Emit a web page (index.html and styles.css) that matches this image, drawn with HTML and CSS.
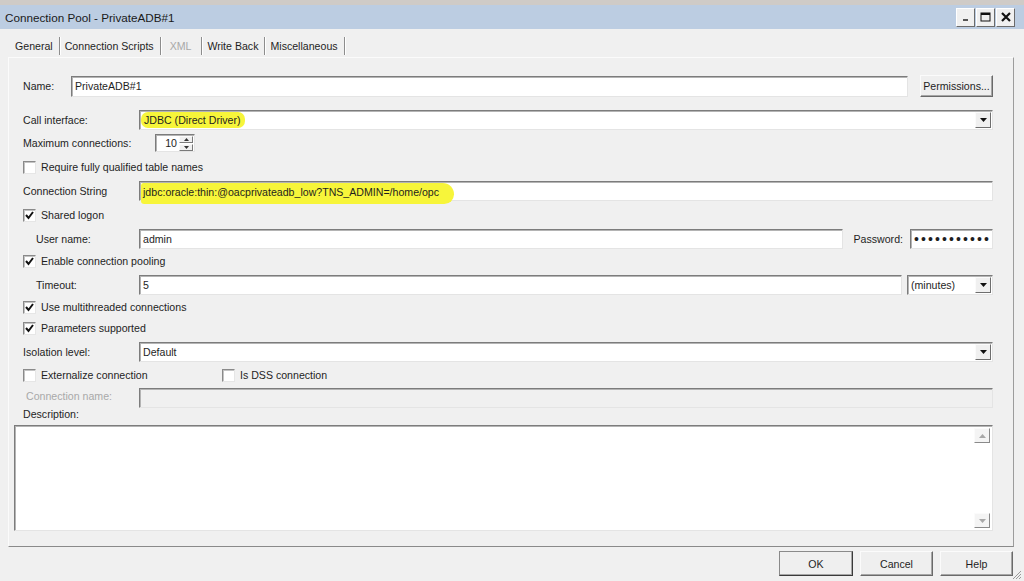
FILE: index.html
```html
<!DOCTYPE html>
<html lang="en">
<head>
    <meta charset="UTF-8">
    <title>Connection Pool - PrivateADB#1</title>
    <link rel="stylesheet" href="styles.css">
</head>
<body>
    <div class="window">
        <div class="titlebar">
            <span class="title">Connection Pool - PrivateADB#1</span>
            <div class="controls">
                <span class="ctl"><svg width="10" height="10" viewBox="0 0 10 10"><rect x="2" y="7" width="5" height="2" fill="#555"/></svg></span>
                <span class="ctl"><svg width="11" height="10" viewBox="0 0 11 10"><rect x="1" y="1" width="9" height="8" fill="none" stroke="#111" stroke-width="1"/><rect x="1" y="1" width="9" height="2" fill="#111"/></svg></span>
                <span class="ctl"><svg width="10" height="10" viewBox="0 0 10 10"><path d="M1 1 L9 9 M9 1 L1 9" stroke="#111" stroke-width="2.2"/></svg></span>
            </div>
        </div>

        <div class="tabs">
            <span class="tab active">General</span>
            <span class="tab">Connection Scripts</span>
            <span class="tab disabled">XML</span>
            <span class="tab">Write Back</span>
            <span class="tab">Miscellaneous</span>
        </div>

        <div class="panel">
            <div class="row tall">
                <label class="lbl lbl-name">Name:</label>
                <div class="field name-field">PrivateADB#1</div>
                <button class="btn perm">Permissions...</button>
            </div>

            <div class="row field-row m11">
                <label class="lbl">Call interface:</label>
                <div class="field select">
                    <span class="mark">JDBC (Direct Driver)</span>
                    <span class="drop"><svg width="7" height="4" viewBox="0 0 7 4"><path d="M0 0 H7 L3.5 4 Z" fill="#111"/></svg></span>
                </div>
            </div>

            <div class="row spin-row m2">
                <label class="lbl lbl-max">Maximum connections:</label>
                <div class="field spinner">
                    <span class="spin-val">10</span>
                    <span class="spin-btns">
                        <span class="spin-btn"><svg width="5" height="3" viewBox="0 0 5 3"><path d="M0 3 H5 L2.5 0 Z" fill="#333"/></svg></span>
                        <span class="spin-btn"><svg width="5" height="3" viewBox="0 0 5 3"><path d="M0 0 H5 L2.5 3 Z" fill="#333"/></svg></span>
                    </span>
                </div>
            </div>

            <div class="row check-row m5">
                <span class="box"></span>
                <span>Require fully qualified table names</span>
            </div>

            <div class="row field-row m4">
                <label class="lbl">Connection String</label>
                <div class="field">
                    <span class="mark mark-long">jdbc:oracle:thin:@oacprivateadb_low?TNS_ADMIN=/home/opc</span>
                </div>
            </div>

            <div class="row check-row m4">
                <span class="box"><svg width="11" height="11" viewBox="0 0 11 11"><path d="M2 5 L4.5 8 L9 2" fill="none" stroke="#111" stroke-width="2"/></svg></span>
                <span>Shared logon</span>
            </div>

            <div class="row field-row m4">
                <label class="lbl sub">User name:</label>
                <div class="field user">admin</div>
                <label class="pass-lbl">Password:</label>
                <div class="field pass">•••••••••••</div>
            </div>

            <div class="row check-row m2">
                <span class="box"><svg width="11" height="11" viewBox="0 0 11 11"><path d="M2 5 L4.5 8 L9 2" fill="none" stroke="#111" stroke-width="2"/></svg></span>
                <span>Enable connection pooling</span>
            </div>

            <div class="row field-row m4">
                <label class="lbl sub">Timeout:</label>
                <div class="field timeout">5</div>
                <div class="field select unit">
                    <span>(minutes)</span>
                    <span class="drop"><svg width="7" height="4" viewBox="0 0 7 4"><path d="M0 0 H7 L3.5 4 Z" fill="#111"/></svg></span>
                </div>
            </div>

            <div class="row check-row m2">
                <span class="box"><svg width="11" height="11" viewBox="0 0 11 11"><path d="M2 5 L4.5 8 L9 2" fill="none" stroke="#111" stroke-width="2"/></svg></span>
                <span>Use multithreaded connections</span>
            </div>

            <div class="row check-row m3">
                <span class="box"><svg width="11" height="11" viewBox="0 0 11 11"><path d="M2 5 L4.5 8 L9 2" fill="none" stroke="#111" stroke-width="2"/></svg></span>
                <span>Parameters supported</span>
            </div>

            <div class="row field-row m4">
                <label class="lbl">Isolation level:</label>
                <div class="field select">
                    <span>Default</span>
                    <span class="drop"><svg width="7" height="4" viewBox="0 0 7 4"><path d="M0 0 H7 L3.5 4 Z" fill="#111"/></svg></span>
                </div>
            </div>

            <div class="row check-row m3">
                <div class="check-pair">
                    <span class="box"></span>
                    <span>Externalize connection</span>
                </div>
                <span class="box"></span>
                <span>Is DSS connection</span>
            </div>

            <div class="row short-row m4">
                <label class="lbl grey">Connection name:</label>
                <div class="field disabled"></div>
            </div>

            <div class="row desc-row">
                <label>Description:</label>
            </div>

            <div class="textarea">
                <div class="scroll">
                    <span class="sbtn"><svg width="7" height="4" viewBox="0 0 7 4"><path d="M0 4 H7 L3.5 0 Z" fill="#a8a8a8"/></svg></span>
                    <span class="sbtn"><svg width="7" height="4" viewBox="0 0 7 4"><path d="M0 0 H7 L3.5 4 Z" fill="#a8a8a8"/></svg></span>
                </div>
            </div>
        </div>

        <div class="footer">
            <button class="btn ok">OK</button>
            <button class="btn">Cancel</button>
            <button class="btn">Help</button>
        </div>

        <svg class="grip" width="12" height="12" viewBox="0 0 12 12">
            <path d="M11 3 L3 11 M11 6 L6 11 M11 9 L9 11" stroke="#9a9a9a" stroke-width="1"/>
        </svg>
    </div>
</body>
</html>
```

FILE: styles.css
```css
* {
    margin: 0;
    padding: 0;
    box-sizing: border-box;
}

body {
    background: #f0f0f0;
    font-family: "Liberation Sans", Arial, sans-serif;
    font-size: 10.6px;
    color: #1e1e1e;
    width: 1024px;
    height: 581px;
    overflow: hidden;
}

.window {
    position: relative;
    height: 581px;
}

/* title bar */
.titlebar {
    height: 29px;
    border-top: 5px solid #cfcbc7;
    background: #bccde2;
    display: flex;
    align-items: center;
    justify-content: space-between;
    padding: 0 9px 0 5px;
}

.title {
    font-size: 11.7px;
    color: #1a1a1a;
}

.controls {
    display: flex;
    gap: 1px;
}

.ctl {
    width: 19px;
    height: 19px;
    background: #f0f0f0;
    border: 1px solid;
    border-color: #fff #6b6b6b #6b6b6b #fff;
    display: flex;
    align-items: center;
    justify-content: center;
}

/* tabs */
.tabs {
    height: 28px;
    display: flex;
    align-items: flex-end;
    padding: 0 0 2px 10px;
}

.tab {
    height: 18px;
    line-height: 18px;
    padding: 0 6px 0 5px;
    border-right: 1px solid #8d8d8d;
    box-shadow: 1px 0 0 #fff;
}

.tab.disabled {
    color: #a8a8a8;
    padding: 0 10px 0 9px;
}

/* panel */
.panel {
    height: 490px;
    margin: 0 10px 0 8px;
    border: 1px solid;
    border-color: #fbfbfb #9c9c9c #8a8a8a #fbfbfb;
    padding: 16px 20px 0 5px;
}

.row {
    display: flex;
    align-items: center;
    padding-left: 9px;
}

.tall { height: 24px; }
.field-row { height: 22px; }
.spin-row { height: 20px; }
.check-row { height: 18px; }
.short-row { height: 20px; }
.desc-row { height: 12px; }

.m2 { margin-top: 2px; }
.m3 { margin-top: 3px; }
.m4 { margin-top: 4px; }
.m5 { margin-top: 5px; }
.m11 { margin-top: 11px; }

.lbl {
    width: 116px;
    flex-shrink: 0;
}

.lbl-name { width: 48px; }
.lbl-max { width: 132px; }

.lbl.sub {
    width: 103px;
    margin-left: 13px;
}

.lbl.grey {
    color: #a9a9a9;
    padding-left: 3px;
    margin-top: -5px;
}

.field {
    flex: 1;
    height: 20px;
    background: #fff;
    border: 1px solid;
    border-color: #7c7c7c #e4e4e4 #e4e4e4 #7c7c7c;
    box-shadow: inset 1px 1px 0 #b4b4b4;
    display: flex;
    align-items: center;
    padding-left: 3px;
    position: relative;
    white-space: nowrap;
}

.name-field { height: 21px; }

.field.disabled {
    background: #f0f0f0;
}

.select {
    justify-content: space-between;
    padding-right: 1px;
}

.drop {
    width: 16px;
    height: 16px;
    background: #f0f0f0;
    border: 1px solid;
    border-color: #fbfbfb #6e6e6e #6e6e6e #fbfbfb;
    display: flex;
    align-items: center;
    justify-content: center;
}

.mark {
    background: #f7f53a;
    border-radius: 7px;
    padding: 2px 4px 2px 3px;
    margin-left: -2px;
}

.mark-long {
    border-radius: 3px 14px 12px 4px;
    padding: 3px 15px 6px 2px;
    margin-top: 4px;
}

/* spinner */
.spinner {
    flex: none;
    width: 40px;
    height: 18px;
    justify-content: flex-end;
    padding: 0 1px 0 0;
}

.spin-val {
    margin-right: 2px;
}

.spin-btns {
    display: flex;
    flex-direction: column;
    gap: 1px;
}

.spin-btn {
    width: 14px;
    height: 7px;
    background: #f0f0f0;
    border: 1px solid;
    border-color: #fbfbfb #7a7a7a #7a7a7a #fbfbfb;
    display: flex;
    align-items: center;
    justify-content: center;
}

/* checkboxes */
.box {
    width: 13px;
    height: 13px;
    background: #fff;
    border: 1px solid;
    border-color: #8a8a8a #e6e6e6 #e6e6e6 #8a8a8a;
    box-shadow: inset 1px 1px 0 #c4c4c4;
    margin-right: 5px;
    display: flex;
    align-items: center;
    justify-content: center;
    flex-shrink: 0;
}

.check-pair {
    width: 199px;
    display: flex;
    align-items: center;
}

/* user / timeout rows */
.user {
    margin-right: 11px;
}

.pass-lbl {
    margin-right: 7px;
}

.pass {
    flex: none;
    width: 83px;
    font-size: 14px;
    letter-spacing: 2.1px;
    padding-left: 3px;
    overflow: hidden;
}

.timeout {
    margin-right: 5px;
}

.unit {
    flex: none;
    width: 86px;
}

/* description */
.textarea {
    margin-top: 5px;
    height: 106px;
    background: #fff;
    border: 1px solid;
    border-color: #7c7c7c #e4e4e4 #e4e4e4 #7c7c7c;
    box-shadow: inset 1px 1px 0 #b4b4b4;
    display: flex;
    justify-content: flex-end;
}

.scroll {
    width: 18px;
    display: flex;
    flex-direction: column;
    justify-content: space-between;
    padding: 2px 2px 2px 0;
}

.sbtn {
    width: 16px;
    height: 15px;
    background: #f4f4f4;
    border: 1px solid;
    border-color: #fbfbfb #8a8a8a #8a8a8a #fbfbfb;
    display: flex;
    align-items: center;
    justify-content: center;
}

/* buttons */
.btn {
    font-family: inherit;
    font-size: inherit;
    color: #1e1e1e;
    width: 73px;
    height: 25px;
    background: #efefef;
    border: 1px solid;
    border-color: #fbfbfb #6a6a6a #6a6a6a #fbfbfb;
    box-shadow: inset -1px -1px 0 #a6a6a6;
}

.perm {
    height: 22px;
    margin-left: 12px;
}

.btn.ok {
    width: 74px;
    border-color: #8a8a8a #3a3a3a #3a3a3a #8a8a8a;
}

.footer {
    display: flex;
    justify-content: flex-end;
    gap: 7px;
    padding: 4px 11px 0 0;
}

.grip {
    position: absolute;
    right: 2px;
    bottom: 1px;
}
```
